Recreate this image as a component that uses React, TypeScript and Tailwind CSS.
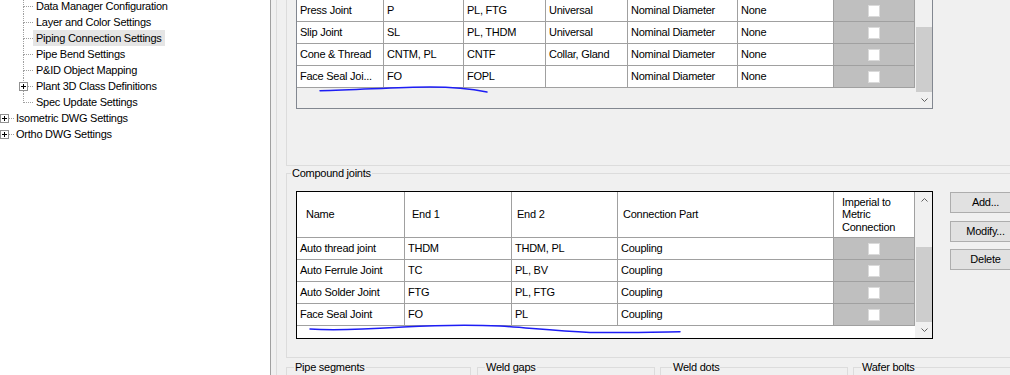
import React from 'react'

const topRows = [
  ['Press Joint', 'P', 'PL, FTG', 'Universal', 'Nominal Diameter', 'None'],
  ['Slip Joint', 'SL', 'PL, THDM', 'Universal', 'Nominal Diameter', 'None'],
  ['Cone & Thread', 'CNTM, PL', 'CNTF', 'Collar, Gland', 'Nominal Diameter', 'None'],
  ['Face Seal Joi...', 'FO', 'FOPL', '', 'Nominal Diameter', 'None'],
]
const topWidths = ['w-[87px]', 'w-[80px]', 'w-[82px]', 'w-[82px]', 'w-[110px]', 'w-[96px]']

const compRows = [
  ['Auto thread joint', 'THDM', 'THDM, PL', 'Coupling'],
  ['Auto Ferrule Joint', 'TC', 'PL, BV', 'Coupling'],
  ['Auto Solder Joint', 'FTG', 'PL, FTG', 'Coupling'],
  ['Face Seal Joint', 'FO', 'PL', 'Coupling'],
]
const compWidths = ['w-[108px]', 'w-[107px]', 'w-[106px]', 'w-[216px]']

const PlusBox = ({ className = '' }: { className?: string }) => (
  <svg width="9" height="9" viewBox="0 0 9 9" className={className} shapeRendering="crispEdges">
    <rect x="0.5" y="0.5" width="8" height="8" fill="#fff" stroke="#919191" />
    <path d="M2 4.5H7M4.5 2V7" stroke="#000" />
  </svg>
)

const Chevron = ({ up }: { up?: boolean }) => (
  <svg width="7" height="4" viewBox="0 0 7 4">
    <path d={up ? 'M0.5 3.5L3.5 0.5L6.5 3.5' : 'M0.5 0.5L3.5 3.5L6.5 0.5'} stroke="#606060" fill="none" />
  </svg>
)

const Branch = ({ label, last, plus, selected }: { label: string; last?: boolean; plus?: boolean; selected?: boolean }) => (
  <div className="flex h-4">
    <div className="w-[23px] shrink-0" />
    <div className="relative w-[10px] shrink-0 flex flex-col">
      <div className="h-[9px] border-l border-b border-dotted border-[#a0a0a0]" />
      {!last && <div className="h-[7px] border-l border-dotted border-[#a0a0a0]" />}
      {plus && <PlusBox className="absolute left-[-4px] top-[4px]" />}
    </div>
    <div className={selected ? 'px-[3px] flex items-center bg-[#e5e5e5]' : 'px-[3px] flex items-center'}>{label}</div>
  </div>
)

const Root = ({ label }: { label: string }) => (
  <div className="flex h-4 items-center">
    <PlusBox className="shrink-0" />
    <div className="w-[5px] self-stretch">
      <div className="h-[9px] border-b border-dotted border-[#a0a0a0]" />
    </div>
    <div className="pl-[2px] pr-[3px]">{label}</div>
  </div>
)

const CheckCell = () => (
  <div className="w-[81px] shrink-0 bg-[#bfbfbf] border-r border-[#a0a0a0] flex items-center justify-center">
    <span className="w-[12px] h-[12px] bg-white border border-[#dadada]" />
  </div>
)

const Group = ({ label, className, legendClass }: { label: string; className: string; legendClass: string }) => (
  <fieldset className={'h-[40px] shrink-0 border border-[#dcdcdc] ' + className}>
    <legend className={'px-[1px] leading-[13px] ' + legendClass}>{label}</legend>
  </fieldset>
)

export default function App() {
  return (
    <div className="w-[1010px] h-[375px] overflow-hidden relative flex bg-[#f0f0f0] text-black text-[11px] tracking-[-0.25px] leading-[13px] font-['Liberation_Sans',Arial,sans-serif]">
      {/* tree */}
      <div className="w-[271px] h-full shrink-0 bg-white border-r border-[#a0a0a0]">
        <div className="-mt-[2px] flex flex-col">
          <Branch label="Data Manager Configuration" />
          <Branch label="Layer and Color Settings" />
          <Branch label="Piping Connection Settings" selected />
          <Branch label="Pipe Bend Settings" />
          <Branch label="P&ID Object Mapping" />
          <Branch label="Plant 3D Class Definitions" plus />
          <Branch label="Spec Update Settings" last />
          <Root label="Isometric DWG Settings" />
          <Root label="Ortho DWG Settings" />
        </div>
      </div>

      {/* settings */}
      <div className="ml-[5px] border-l border-[#dcdcdc] pl-[9px] flex flex-col flex-1 min-w-0 overflow-hidden">
        <div className="w-[800px] shrink-0 h-[166px] border-l border-b border-[#dcdcdc] pl-[9px]">
          <div className="w-[637px] h-[110px] -mt-px border border-[#828790] flex">
            <div className="w-[618px] flex flex-col">
              {topRows.map((r, i) => (
                <div key={i} className="flex h-[22px] shrink-0 bg-white border-b border-[#a0a0a0]">
                  {r.map((c, j) => (
                    <div key={j} className={topWidths[j] + ' shrink-0 border-r border-[#a0a0a0] flex items-center pl-[3px] whitespace-nowrap overflow-hidden'}>
                      {c}
                    </div>
                  ))}
                  <CheckCell />
                </div>
              ))}
            </div>
            <div className="w-[17px] pl-[1px] flex flex-col">
              <div className="h-[27px]" />
              <div className="h-[65px] bg-[#cdcdcd]" />
              <div className="h-[16px] flex items-center justify-center">
                <Chevron />
              </div>
            </div>
          </div>
        </div>

        <fieldset className="w-[800px] shrink-0 mt-px border border-[#dcdcdc]">
          <legend className="ml-[4px] px-[1px] leading-[13px]">Compound joints</legend>
          <div className="pl-[9px] pt-[11px] pb-[18px] flex">
            <div className="w-[637px] h-[148px] border border-black flex bg-white">
              <div className="w-[618px] flex flex-col">
                <div className="flex h-[46px] shrink-0 border-b border-[#a0a0a0]">
                  <div className="w-[108px] shrink-0 border-r border-[#a0a0a0] flex items-center pl-[9px]">Name</div>
                  <div className="w-[107px] shrink-0 border-r border-[#a0a0a0] flex items-center pl-[7px]">End 1</div>
                  <div className="w-[106px] shrink-0 border-r border-[#a0a0a0] flex items-center pl-[5px]">End 2</div>
                  <div className="w-[216px] shrink-0 border-r border-[#a0a0a0] flex items-center pl-[5px]">Connection Part</div>
                  <div className="w-[81px] shrink-0 border-r border-[#a0a0a0] flex items-center pl-[8px] leading-[12.5px]">
                    Imperial to
                    <br />
                    Metric
                    <br />
                    Connection
                  </div>
                </div>
                {compRows.map((r, i) => (
                  <div key={i} className="flex h-[22px] shrink-0 border-b border-[#a0a0a0]">
                    {r.map((c, j) => (
                      <div key={j} className={compWidths[j] + ' shrink-0 border-r border-[#a0a0a0] flex items-center pl-[3px] whitespace-nowrap'}>
                        {c}
                      </div>
                    ))}
                    <CheckCell />
                  </div>
                ))}
              </div>
              <div className="w-[17px] pl-[1px] flex flex-col bg-[#f0f0f0]">
                <div className="h-[16px] flex items-center justify-center">
                  <Chevron up />
                </div>
                <div className="h-[39px]" />
                <div className="h-[75px] bg-[#cdcdcd]" />
                <div className="h-[16px] flex items-center justify-center">
                  <Chevron />
                </div>
              </div>
            </div>
            <div className="ml-[17px] mt-px flex flex-col">
              <button className="w-[71px] h-[21px] bg-[#e1e1e1] border border-[#adadad]">Add...</button>
              <button className="w-[71px] h-[21px] mt-[8px] bg-[#e1e1e1] border border-[#adadad]">Modify...</button>
              <button className="w-[71px] h-[21px] mt-[7px] bg-[#e1e1e1] border border-[#adadad]">Delete</button>
            </div>
          </div>
        </fieldset>

        <div className="flex mt-[3px]">
          <Group label="Pipe segments" className="w-[185px]" legendClass="ml-[7px]" />
          <Group label="Weld gaps" className="w-[178px] ml-[6px]" legendClass="ml-[7px]" />
          <Group label="Weld dots" className="w-[188px] ml-[5px]" legendClass="ml-[11px]" />
          <Group label="Wafer bolts" className="w-[188px] ml-[5px]" legendClass="ml-[7px]" />
        </div>
      </div>

      {/* hand-drawn marks */}
      <svg className="absolute inset-0 pointer-events-none" width="1010" height="375" viewBox="0 0 1010 375">
        <path d="M320 90.7C360 90 395 87 430 87C455 87 472 89 487 92" stroke="#1d1df5" strokeWidth="1.4" fill="none" strokeLinecap="round" />
        <path
          d="M310 329C340 331 370 329 403 327C430 325.5 470 324.5 500 326C530 328 555 331 590 332.5C620 333 650 332 680 331.7"
          stroke="#1d1df5"
          strokeWidth="1.5"
          fill="none"
          strokeLinecap="round"
        />
      </svg>
    </div>
  )
}
